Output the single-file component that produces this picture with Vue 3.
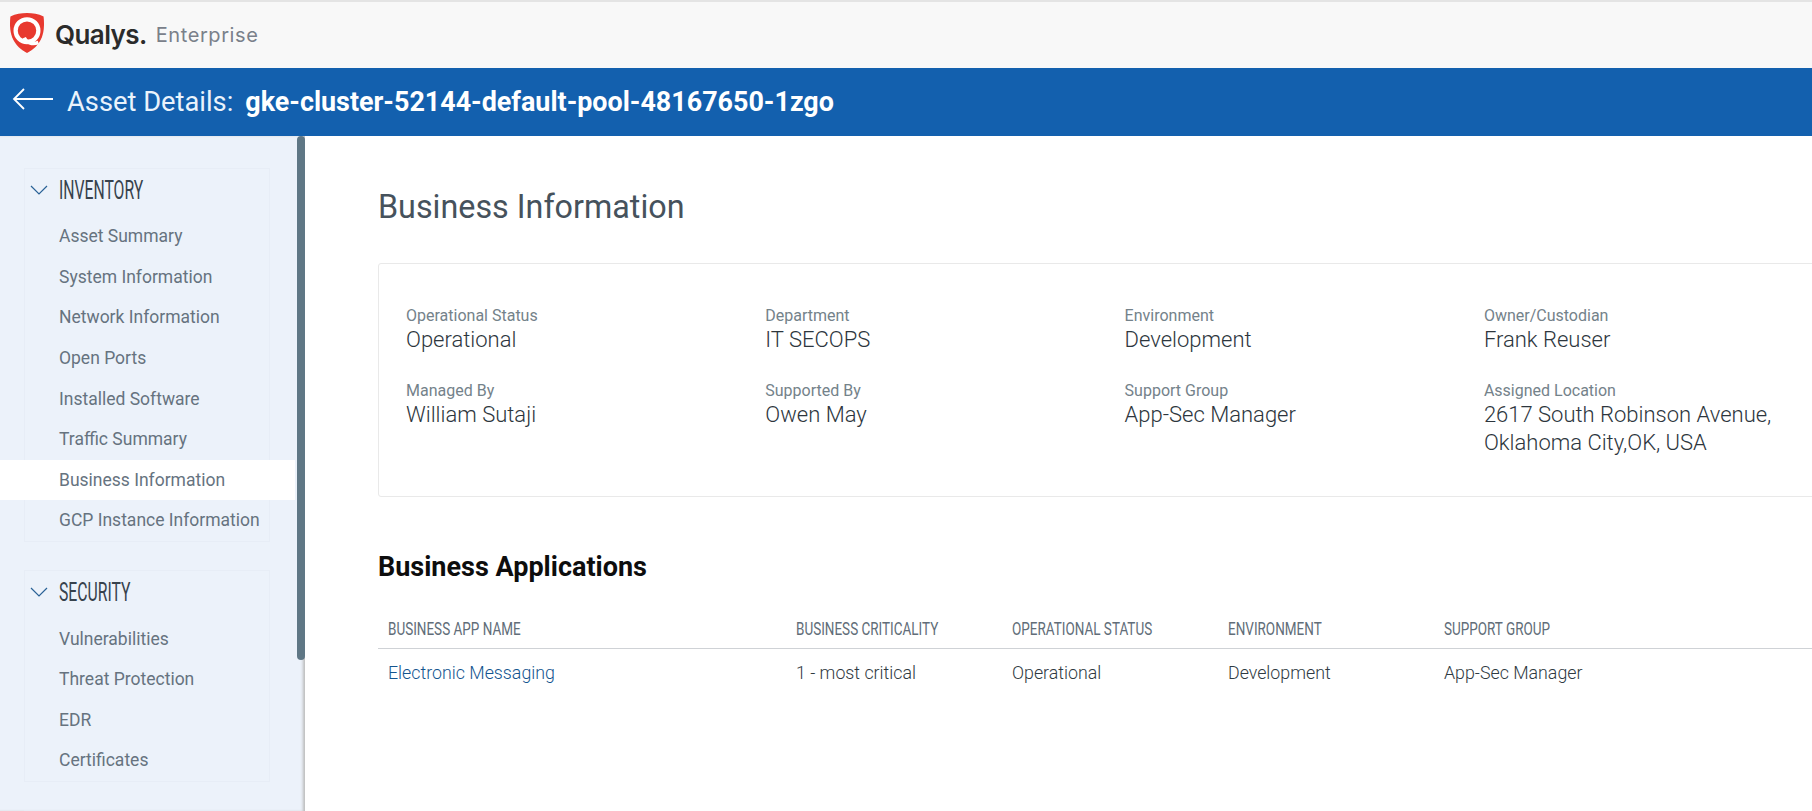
<script setup>
const groups = [
  { title: 'INVENTORY', items: ['Asset Summary', 'System Information', 'Network Information', 'Open Ports', 'Installed Software', 'Traffic Summary', 'Business Information', 'GCP Instance Information'] },
  { title: 'SECURITY', items: ['Vulnerabilities', 'Threat Protection', 'EDR', 'Certificates'] },
  { title: '', items: [] }
]
const fields = [
  ['Operational Status', 'Operational'], ['Department', 'IT SECOPS'], ['Environment', 'Development'], ['Owner/Custodian', 'Frank Reuser'],
  ['Managed By', 'William Sutaji'], ['Supported By', 'Owen May'], ['Support Group', 'App-Sec Manager'], ['Assigned Location', '2617 South Robinson Avenue, Oklahoma City,OK, USA']
]
const headers = ['BUSINESS APP NAME', 'BUSINESS CRITICALITY', 'OPERATIONAL STATUS', 'ENVIRONMENT', 'SUPPORT GROUP']
const row = ['Electronic Messaging', '1 - most critical', 'Operational', 'Development', 'App-Sec Manager']
</script>

<template>
  <div class="page">
    <header class="top">
      <svg class="logo" width="36" height="42" viewBox="0 0 38 44">
        <path d="M19 1 C25 1 31 2 36.500 4.500 C37.500 14 37 22 33.500 29 C30.500 35 25 40 19 43 C13 40 7.500 35 4.500 29 C1 22 .5 14 1.500 4.500 C7 2 13 1 19 1 Z" fill="#e8392f"/>
        <circle cx="19" cy="19.500" r="12" fill="none" stroke="#fff" stroke-width="4.500"/>
        <path d="M16 27 C19 33 25 34 31 32" fill="none" stroke="#fff" stroke-width="4"/>
      </svg>
      <span class="brand">Qualys.</span>
      <span class="edition">Enterprise</span>
    </header>
    <div class="bar">
      <svg class="back" width="42" height="24" viewBox="0 0 42 24">
        <path d="M41 12 H2 M12 2 L2 12 L12 22" fill="none" stroke="#fff" stroke-width="1.800"/>
      </svg>
      <span class="bar-label">Asset Details:</span>
      <span class="bar-name">gke-cluster-52144-default-pool-48167650-1zgo</span>
    </div>
    <div class="body">
      <aside class="side">
        <section v-for="g in groups" :key="g.title" class="group">
          <div v-if="g.title" class="group-head">
            <svg width="18" height="10" viewBox="0 0 18 10">
              <path d="M1 1 L9 9 L17 1" fill="none" stroke="#2a6296" stroke-width="1.200"/>
            </svg>
            <span class="group-title">{{ g.title }}</span>
          </div>
          <a v-for="it in g.items" :key="it" class="item" :class="{ active: it === 'Business Information' }">{{ it }}</a>
        </section>
        <div class="thumb"></div>
      </aside>
      <main class="main">
        <h1 class="title">Business Information</h1>
        <div class="card">
          <div v-for="f in fields" :key="f[0]" class="field">
            <div class="label">{{ f[0] }}</div>
            <div class="value">{{ f[1] }}</div>
          </div>
        </div>
        <h2 class="sub">Business Applications</h2>
        <div class="table">
          <div v-for="h in headers" :key="h" class="th"><span>{{ h }}</span></div>
          <div v-for="(c, i) in row" :key="c" class="td" :class="{ link: i === 0 }">{{ c }}</div>
        </div>
      </main>
    </div>
  </div>
</template>

<style scoped>
.page { width: 1812px; height: 811px; overflow: hidden; display: flex; flex-direction: column; font-family: Roboto, sans-serif; background: #fff; }
.top { height: 66px; border-top: 2px solid #e4e4e4; background: #f8f8f8; display: flex; align-items: center; padding-left: 9px; flex: none; }
.logo { margin-top: -4px; margin-right: 10px; flex: none; }
.brand { font-family: Inter, sans-serif; font-weight: 600; font-size: 26px; letter-spacing: -.6px; color: #2b2b2b; margin-top: -2px; }
.edition { font-family: Inter, sans-serif; font-weight: 400; font-size: 20px; color: #7a808a; margin-left: 9px; letter-spacing: .6px; }
.bar { height: 68px; background: #1360ae; display: flex; align-items: center; color: #fff; flex: none; padding-left: 12px; }
.back { margin-top: -7px; margin-right: 13px; }
.bar-label { font-size: 27.300px; color: #eaf3fc; margin-right: 12px; }
.bar-name { font-size: 26.900px; font-weight: 700; }
.body { flex: 1; display: flex; min-height: 0; }
.side { position: relative; width: 305px; flex: none; background: #ecf2fa; padding: 32px 0 0; box-sizing: border-box; box-shadow: inset -3px 0 3px -1px #bcbcbc; overflow: hidden; }
.group { margin: 0 35px 28.500px 24px; border: 1px solid #e7edf6; }
.group-head { height: 42px; margin-bottom: 5px; display: flex; align-items: center; gap: 11px; padding-left: 5px; }
.group-title { display: inline-block; font-size: 26px; color: #37424d; transform: scaleX(.605); transform-origin: left center; }
.item { display: flex; align-items: center; height: 40.600px; margin-left: -25px; margin-right: -26px; padding-left: 59px; font-size: 17.500px; color: #66737f; }
.item.active { background: #fff; }
.thumb { position: absolute; left: 297px; top: 0; width: 8px; height: 524px; background: #5f7785; border-radius: 4px; }
.main { flex: none; padding-left: 73px; }
.title { margin: 50px 0 0; height: 42px; font-size: 32.300px; line-height: 42px; font-weight: 400; color: #46525c; }
.card { width: 1500px; margin-top: 35px; height: 234px; box-sizing: border-box; border: 1px solid #e9e9e9; border-radius: 3px; padding: 42px 0 0 27px; display: grid; grid-template-columns: repeat(4, 359.300px); grid-auto-rows: 75px; }
.label { font-size: 16px; line-height: 20px; color: #74828a; }
.value { font-size: 22px; line-height: 28px; font-weight: 300; color: #2d363d; width: 300px; }
.sub { margin: 0; padding-top: 54px; font-size: 27px; line-height: 32px; font-weight: 700; color: #0d0d0d; }
.table { margin-top: 32px; width: 1440px; display: grid; grid-template-columns: 408px 216px 216px 216px 1fr; }
.th { height: 33px; padding-left: 10px; border-bottom: 1px solid #cfd2d6; line-height: 28px; color: #616d78; }
.th span { display: inline-block; font-size: 19px; white-space: nowrap; transform: scaleX(.71); transform-origin: left center; }
.td { padding: 13px 0 0 10px; font-size: 17.800px; line-height: 22px; font-weight: 300; color: #2f3a42; }
.td.link { color: #14558f; }
</style>
